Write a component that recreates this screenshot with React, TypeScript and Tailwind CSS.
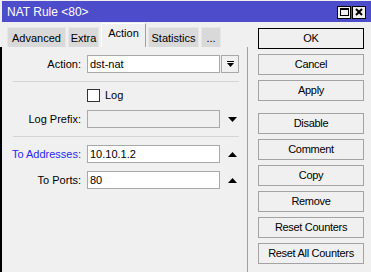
import React from "react";

const tabs = [
  { label: "Advanced", w: "w-[59px]" },
  { label: "Extra", w: "w-[31px]" },
  { label: "Action", w: "w-[45px]", active: true },
  { label: "Statistics", w: "w-[51px]" },
  { label: "...", w: "w-[20px]" },
];

const buttons = [
  ["OK", "Cancel", "Apply"],
  ["Disable", "Comment", "Copy", "Remove", "Reset Counters", "Reset All Counters"],
];

function DownArrow() {
  return (
    <svg width="9" height="5" viewBox="0 0 9 5">
      <path d="M0 0H9L4.5 5Z" fill="#000" />
    </svg>
  );
}

function UpArrow() {
  return (
    <svg width="9" height="5" viewBox="0 0 9 5">
      <path d="M0 5H9L4.5 0Z" fill="#000" />
    </svg>
  );
}

function Row({
  label,
  blue,
  children,
  className = "",
}: {
  label: string;
  blue?: boolean;
  children: React.ReactNode;
  className?: string;
}) {
  return (
    <div className={`flex items-center ${className}`}>
      <div
        className={`w-[80px] pr-[1px] text-right ${blue ? "text-[#2a2af0]" : "text-black"}`}
      >
        {label}
      </div>
      <div className="ml-[5px] flex items-center">{children}</div>
    </div>
  );
}

function Field({ value, disabled }: { value?: string; disabled?: boolean }) {
  return (
    <div
      className={`flex h-[18px] w-[133px] items-center border border-[#a9a9a9] px-[2px] ${
        disabled ? "bg-[#f0f0f0]" : "bg-white"
      }`}
    >
      {value}
    </div>
  );
}

function Sep({ className = "" }: { className?: string }) {
  return <div className={`ml-[11px] h-px w-[226px] bg-[#d5d5d5] ${className}`} />;
}

function Btn({ label, primary }: { label: string; primary?: boolean }) {
  return (
    <div
      className={`flex h-[21px] w-[106px] items-center justify-center bg-[#f0f0f0] tracking-[-0.3px] ${
        primary ? "border border-black" : "border border-[#a3a3a3]"
      }`}
    >
      {label}
    </div>
  );
}

export default function App() {
  return (
    <div className="relative h-[272px] w-[371px] overflow-hidden bg-[#f0f0f0] font-['Liberation_Sans',Arial,sans-serif] text-[11px] text-black">
      <div className="ml-[2px] mt-px flex h-[21px] items-center bg-[#4d4dcb] pl-[5px] pr-[5px] text-white">
        <span className="text-[12px]">NAT Rule &lt;80&gt;</span>
        <div className="ml-auto flex gap-[1px] pt-[1px]">
          <div className="flex h-[13px] w-[14px] items-center justify-center border border-black bg-[#f0f0f0]">
            <div className="h-[8px] w-[9px] border border-black border-t-2" />
          </div>
          <div className="flex h-[13px] w-[14px] items-center justify-center border border-black bg-[#f0f0f0]">
            <svg width="8" height="8" viewBox="0 0 8 8">
              <path d="M1 1L7 7M7 1L1 7" stroke="#000" strokeWidth="2" />
            </svg>
          </div>
        </div>
      </div>

      <div className="flex">
        <div className="w-[248px]">
          <div className="flex h-[25px] items-end gap-[2px] pl-[7px]">
            {tabs.map((t) =>
              t.active ? (
                <div
                  key={t.label}
                  className={`${t.w} flex h-[24px] items-center justify-center border-l border-r border-t border-l-white border-r-[#a0a0a0] border-t-white bg-[#f0f0f0] pb-[4px]`}
                >
                  {t.label}
                </div>
              ) : (
                <div
                  key={t.label}
                  className={`${t.w} flex h-[20px] items-center justify-center border border-b-0 border-[#e6e6e6] bg-[#d9d9d9] pt-[2px]`}
                >
                  {t.label}
                </div>
              )
            )}
          </div>

          <div className="h-[225px] border-l-2 border-r border-l-black border-r-[#a0a0a0] pt-[8px]">
            <Row label="Action:">
              <Field value="dst-nat" />
              <div className="ml-[1px] flex h-[18px] w-[18px] flex-col items-center justify-center border border-[#a9a9a9] bg-[#f0f0f0]">
                <div className="h-[1.5px] w-[7px] bg-black" />
                <svg width="7" height="4" viewBox="0 0 7 4" className="mt-[1px]">
                  <path d="M0 0H7L3.5 4Z" fill="#000" />
                </svg>
              </div>
            </Row>

            <Sep className="mt-[8px]" />

            <div className="mt-[6px] flex h-[14px] items-center pl-[85px]">
              <div className="h-[13px] w-[13px] border border-[#333] bg-white" />
              <span className="ml-[5px]">Log</span>
            </div>

            <Row label="Log Prefix:" className="mt-[8px]">
              <Field disabled />
              <div className="ml-[6px] flex w-[12px] justify-center">
                <DownArrow />
              </div>
            </Row>

            <Sep className="mt-[8px]" />

            <Row label="To Addresses:" blue className="mt-[8px]">
              <Field value="10.10.1.2" />
              <div className="ml-[6px] flex w-[12px] justify-center">
                <UpArrow />
              </div>
            </Row>

            <Row label="To Ports:" className="mt-[8px]">
              <Field value="80" />
              <div className="ml-[6px] flex w-[12px] justify-center">
                <UpArrow />
              </div>
            </Row>
          </div>
        </div>

        <div className="ml-[10px] flex flex-col pt-[6px]">
          <div className="flex flex-col gap-[5px]">
            {buttons[0].map((b) => (
              <Btn key={b} label={b} primary={b === "OK"} />
            ))}
          </div>
          <div className="mt-[12px] flex flex-col gap-[5px]">
            {buttons[1].map((b) => (
              <Btn key={b} label={b} />
            ))}
          </div>
        </div>
      </div>
    </div>
  );
}
